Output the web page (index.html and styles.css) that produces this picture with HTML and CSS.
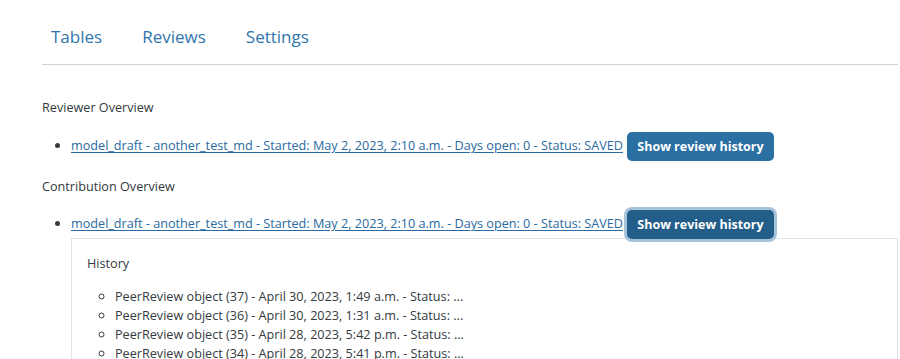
FILE: index.html
```html
<!DOCTYPE html>
<html>
<head>
<meta charset="utf-8">
<link rel="stylesheet" href="styles.css">
</head>
<body>
<div class="page">
  <nav class="tabs">
    <a class="tab" href="#">Tables</a>
    <a class="tab" href="#">Reviews</a>
    <a class="tab" href="#">Settings</a>
  </nav>
  <section class="content">
    <p class="heading">Reviewer Overview</p>
    <ul class="overview first">
      <li><a class="review-link" href="#">model_draft - another_test_md - Started: May 2, 2023, 2:10 a.m. - Days open: 0 - Status: SAVED</a><button class="btn">Show review history</button></li>
    </ul>
    <p class="heading">Contribution Overview</p>
    <ul class="overview second">
      <li><a class="review-link" href="#">model_draft - another_test_md - Started: May 2, 2023, 2:10 a.m. - Days open: 0 - Status: SAVED</a><button class="btn btn-focus">Show review history</button>
        <div class="history">
          <p class="history-title">History</p>
          <ul class="history-list">
            <li>PeerReview object (37) - April 30, 2023, 1:49 a.m. - Status: ...</li>
            <li>PeerReview object (36) - April 30, 2023, 1:31 a.m. - Status: ...</li>
            <li>PeerReview object (35) - April 28, 2023, 5:42 p.m. - Status: ...</li>
            <li>PeerReview object (34) - April 28, 2023, 5:41 p.m. - Status: ...</li>
          </ul>
        </div>
      </li>
    </ul>
  </section>
</div>
</body>
</html>
```
FILE: styles.css
```css
html, body {
  margin: 0;
  padding: 0;
  background: #fff;
}
body {
  font-family: "Open Sans", "Noto Sans", sans-serif;
  color: #333a40;
  font-size: 12.65px;
}
.page {
  padding: 0 2px 0 42px;
}
.tabs {
  display: flex;
  align-items: center;
  height: 64px;
  border-bottom: 1px solid #c9d1da;
  padding-left: 9px;
  gap: 40px;
}
.tab {
  font-size: 17px;
  color: #2f75ad;
  text-decoration: none;
  padding-top: 8px;
}
.content {
  padding-top: 32px;
}
.heading {
  margin: 0;
  line-height: 20px;
}
.overview {
  margin: 0;
  padding-left: 29px;
  list-style: disc;
}
.overview.first {
  margin: 14px 0 15px;
}
.overview.second {
  margin: 13px 0 0;
}
.overview > li {
  line-height: 29px;
}
.overview > li::marker {
  color: #333a40;
}
.review-link {
  color: #2a6aa0;
  text-decoration: underline;
  text-underline-offset: 2px;
}
.btn {
  font-family: "Open Sans", "Noto Sans", sans-serif;
  font-size: 12.5px;
  font-weight: 700;
  color: #fff;
  background: #2a70a3;
  border: none;
  border-radius: 5px;
  height: 29px;
  width: 147px;
  margin-left: 4px;
  vertical-align: middle;
  padding: 0;
}
.btn-focus {
  background: #235d89;
  box-shadow: 0 0 0 3px #a7c3da;
}
.history {
  border: 1px solid #e1e5ea;
  padding: 14px 15px 0;
  margin-top: -1px;
}
.history-title {
  margin: 0 0 14px;
  line-height: 20px;
}
.history-list {
  margin: 0;
  padding-left: 28px;
  list-style: circle;
}
.history-list li {
  line-height: 19px;
}
```
